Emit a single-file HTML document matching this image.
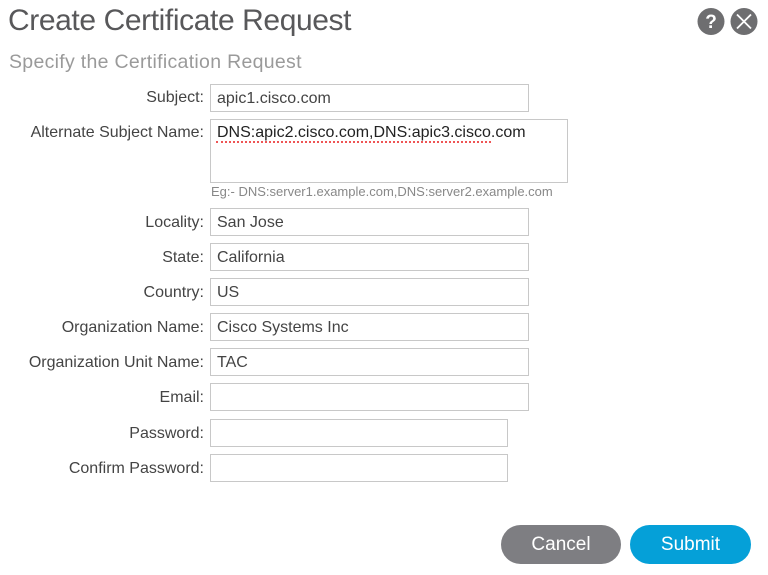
<!DOCTYPE html>
<html><head><style>
*{margin:0;padding:0;box-sizing:border-box}
body{width:768px;height:575px;background:#fff;font-family:"Liberation Sans",sans-serif;position:relative;overflow:hidden;color:#333}
.a{position:absolute;white-space:nowrap}
.t{left:8px;top:4px;font-size:30px;color:#58585a;letter-spacing:-0.4px}
.s{left:9px;top:51px;font-size:19.5px;color:#9a9a9a;letter-spacing:0.3px}
.l{right:564px;font-size:16px;color:#444;text-align:right}
.i{left:210px;width:319px;height:28px;border:1px solid #c8c8c8;font-size:16px;color:#444;padding:5px 6px}
.b{height:39px;border-radius:20px;color:#fff;font-size:19px;text-align:center;line-height:39px}
</style></head><body>
<div class="a t">Create Certificate Request</div>
<svg class="a" style="left:697px;top:7px" width="64" height="30">
<circle cx="14" cy="14.5" r="13.5" fill="#6e6e70"/>
<text x="14" y="21" text-anchor="middle" font-family="Liberation Sans" font-weight="bold" font-size="19" fill="#fff">?</text>
<circle cx="47" cy="14.5" r="13.5" fill="#6e6e70"/>
<path d="M40 7.5L54 21.5M54 7.5L40 21.5" stroke="#fff" stroke-width="1.8"/>
</svg>
<div class="a s">Specify the Certification Request</div>

<div class="a l" style="top:89px">Subject:</div>
<div class="a i" style="top:84px">apic1.cisco.com</div>
<div class="a l" style="top:124px">Alternate Subject Name:</div>
<div class="a i" style="top:119px;width:358px;height:64px;color:#222;padding-top:4px">DNS:apic2.cisco.com,DNS:apic3.cisco.com
<div style="position:absolute;left:5px;top:21px;width:275px;border-top:2px dotted #e55"></div></div>
<div class="a" style="left:211px;top:184px;font-size:13px;color:#888">Eg:- DNS:server1.example.com,DNS:server2.example.com</div>

<div class="a l" style="top:214px">Locality:</div>
<div class="a i" style="top:208px">San Jose</div>
<div class="a l" style="top:249px">State:</div>
<div class="a i" style="top:243px">California</div>
<div class="a l" style="top:284px">Country:</div>
<div class="a i" style="top:278px">US</div>
<div class="a l" style="top:319px">Organization Name:</div>
<div class="a i" style="top:313px">Cisco Systems Inc</div>
<div class="a l" style="top:354px">Organization Unit Name:</div>
<div class="a i" style="top:348px">TAC</div>
<div class="a l" style="top:389px">Email:</div>
<div class="a i" style="top:383px"></div>
<div class="a l" style="top:425px">Password:</div>
<div class="a i" style="top:419px;width:298px"></div>
<div class="a l" style="top:460px">Confirm Password:</div>
<div class="a i" style="top:454px;width:298px"></div>

<div class="a b" style="left:501px;top:525px;width:120px;background:#7e7e82">Cancel</div>
<div class="a b" style="left:630px;top:525px;width:121px;background:#05a0d8">Submit</div>
</body></html>
